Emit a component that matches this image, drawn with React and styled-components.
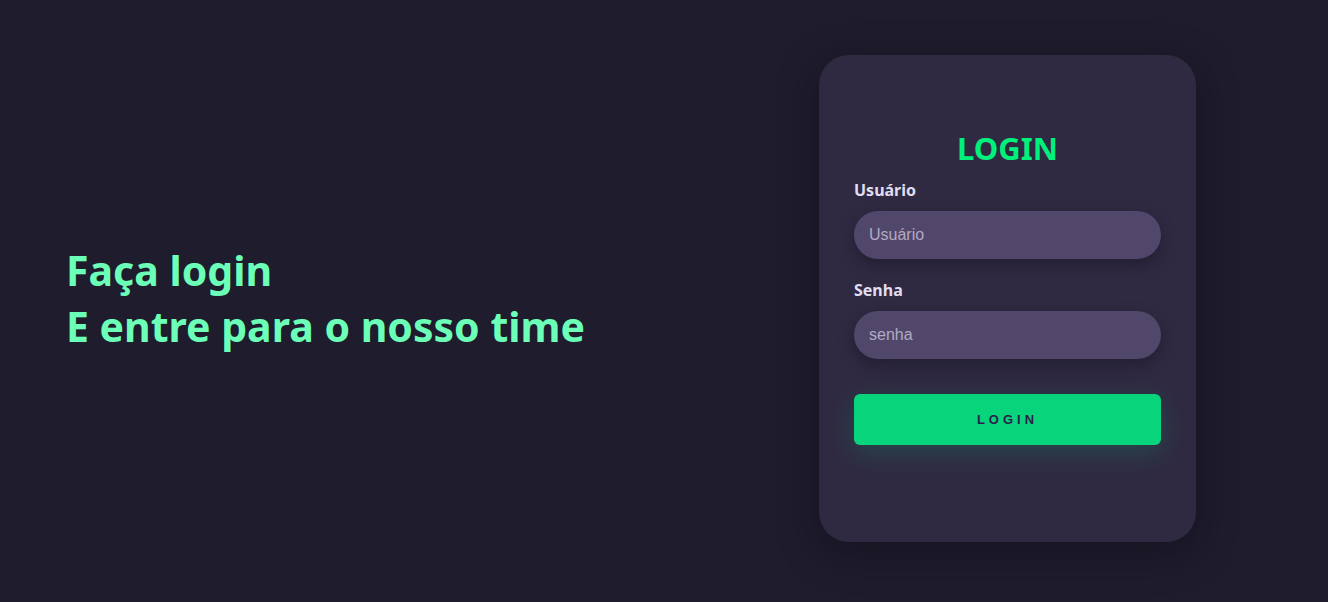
import React from 'react'
import styled, { createGlobalStyle } from 'styled-components'

const GlobalStyle = createGlobalStyle`
  * { box-sizing: border-box; }
  html, body { margin: 0; padding: 0; }
  body {
    background: #1f1c2d;
    font-family: 'Noto Sans', sans-serif;
  }
`

const Page = styled.main`
  height: 100vh;
  display: flex;
  align-items: center;
  justify-content: space-between;
  padding: 0 132px 6px 66px;
`

const Headline = styled.h1`
  margin: 0;
  font-size: 41px;
  line-height: 56px;
  font-weight: 700;
  color: #6bffb8;
`

const Card = styled.form`
  width: 377px;
  height: 487px;
  padding: 73px 35px 0;
  border-radius: 30px;
  background: #2f2a42;
  box-shadow: 0 10px 40px rgba(10, 8, 18, 0.45);
  display: flex;
  flex-direction: column;
`

const Title = styled.h2`
  margin: 0 0 12px;
  text-align: center;
  font-size: 31px;
  line-height: 40px;
  font-weight: 700;
  color: #00f07c;
`

const Label = styled.label`
  display: block;
  font-size: 16px;
  line-height: 20px;
  font-weight: 700;
  color: #e0def0;
  margin-bottom: 11px;
`

const Field = styled.div`
  margin-bottom: ${p => p.$gap}px;
`

const Input = styled.input`
  display: block;
  width: 100%;
  height: 48px;
  border: none;
  outline: none;
  border-radius: 24px;
  padding: 0 15px;
  background: #51476a;
  color: #e0def0;
  font-family: 'Liberation Sans', Arial, sans-serif;
  font-size: 16px;
  box-shadow: 0 6px 16px rgba(20, 16, 32, 0.45);

  &::placeholder {
    color: #b1aac4;
  }
`

const Button = styled.button`
  width: 100%;
  height: 51px;
  border: none;
  border-radius: 6px;
  background: #08d47c;
  color: #2a1f4a;
  font-family: 'Liberation Sans', Arial, sans-serif;
  font-size: 13px;
  font-weight: 700;
  letter-spacing: 4px;
  cursor: pointer;
  box-shadow: 0 8px 26px rgba(8, 212, 124, 0.18);
`

export default function App() {
  return (
    <>
      <GlobalStyle />
      <Page>
        <Headline>
          Faça login
          <br />
          E entre para o nosso time
        </Headline>
        <Card onSubmit={e => e.preventDefault()}>
          <Title>LOGIN</Title>
          <Field $gap={21}>
            <Label htmlFor="usuario">Usuário</Label>
            <Input id="usuario" type="text" placeholder="Usuário" />
          </Field>
          <Field $gap={35}>
            <Label htmlFor="senha">Senha</Label>
            <Input id="senha" type="password" placeholder="senha" />
          </Field>
          <Button type="submit">LOGIN</Button>
        </Card>
      </Page>
    </>
  )
}
